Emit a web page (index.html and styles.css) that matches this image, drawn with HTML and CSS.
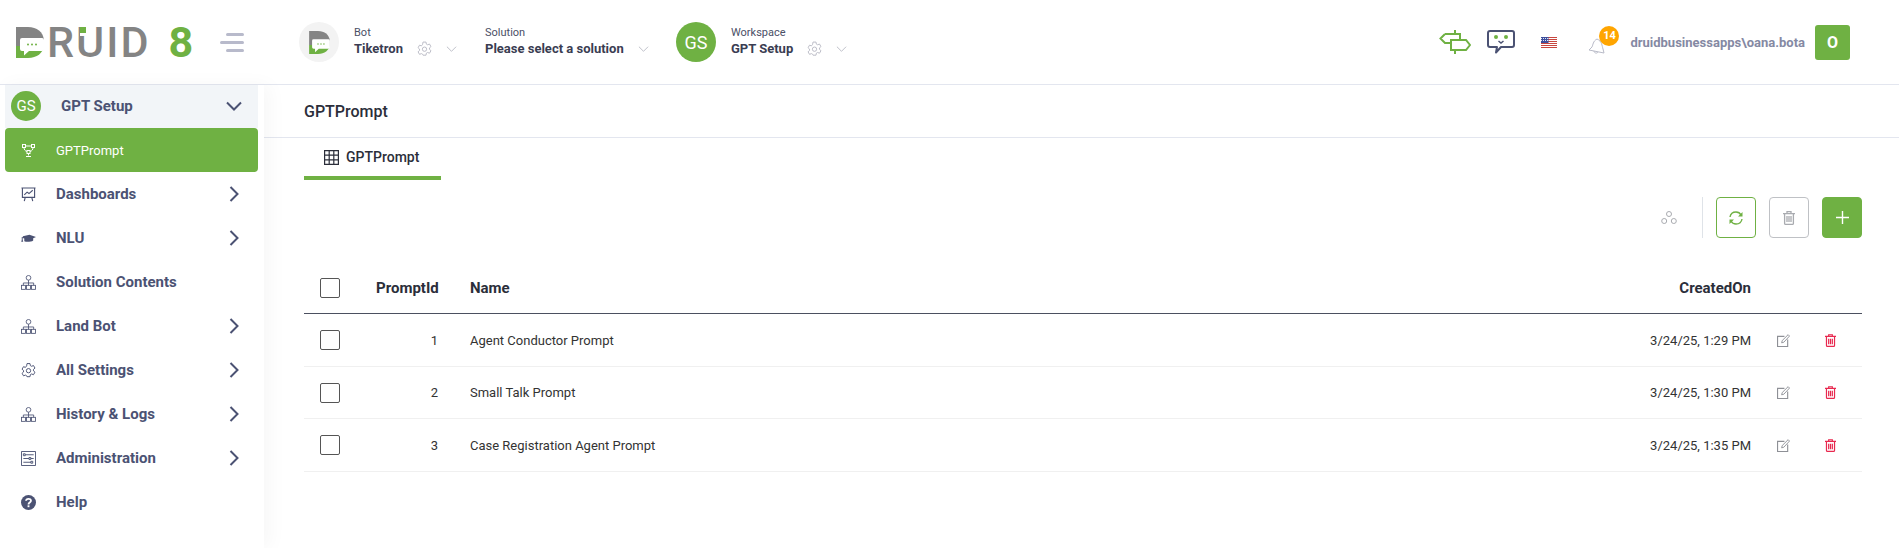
FILE: index.html
```html
<!DOCTYPE html>
<html>
<head>
  <title>GPTPrompt</title>
  <link rel="stylesheet" href="styles.css">
</head>
<body>
  <svg class="defs" width="0" height="0">
    <symbol id="i-mark" viewBox="0 0 28 31">
      <path fill="#848484" d="M0 0H12C21 0 27 5 28 13V19H0Z"/>
      <path fill="#6fb143" d="M0 19H28C27 26 21 31 12 31H0Z"/>
      <path fill="#fff" d="M6 11H26Q28 11 28 13V22Q28 24 26 24H13L8 28.500V24H6Q4 24 4 22V13Q4 11 6 11Z"/>
      <g fill="#6fb143"><circle cx="12" cy="17.500" r="1"/><circle cx="16" cy="17.500" r="1"/><circle cx="20" cy="17.500" r="1"/></g>
    </symbol>
    <symbol id="i-gear" viewBox="0 0 16 16">
      <path fill="none" stroke="currentColor" d="M6.400.6h3.200l.4 2.200 1.300.7 2-.8 1.600 2.700-1.600 1.400v1.600l1.600 1.400-1.600 2.700-2-.8-1.300.7-.4 2.200H6.400L6 13.600l-1.300-.7-2 .8L1.100 11l1.600-1.400V8L1.100 6.600l1.600-2.700 2 .8L6 3z"/>
      <circle cx="8" cy="8.200" r="2.300" fill="none" stroke="currentColor"/>
    </symbol>
    <symbol id="i-down" viewBox="0 0 12 8"><path fill="none" stroke="currentColor" d="M1 1.500l5 5 5-5"/></symbol>
    <symbol id="i-right" viewBox="0 0 10 16"><path fill="none" stroke="currentColor" stroke-width="2" d="M1.500 1l7 7-7 7"/></symbol>
    <symbol id="i-org" viewBox="0 0 16 16">
      <g fill="none" stroke="currentColor" stroke-width=".9">
        <circle cx="8" cy="3" r="2.500"/>
        <path d="M8 5.500V11M2.500 11V8.500h11V11"/>
        <rect x=".5" y="11" width="4.300" height="4.300"/><rect x="5.850" y="11" width="4.300" height="4.300"/><rect x="11.200" y="11" width="4.300" height="4.300"/>
      </g>
    </symbol>
    <symbol id="i-trash" viewBox="0 0 12 14">
      <path fill="none" stroke="currentColor" stroke-width="1.300" d="M1.600 3v9.400c0 .6.400 1 1 1h6.800c.6 0 1-.4 1-1V3M0 2.600h12M4 2.400V.7h4v1.700M4 5v6M6 5v6M8 5v6"/>
    </symbol>
    <symbol id="i-edit" viewBox="0 0 14 14">
      <path fill="none" stroke="currentColor" stroke-width="1.200" d="M8 2.500H.6v10.900h10.900V6"/>
      <path fill="none" stroke="currentColor" d="M5 9.500l.6-2.400L12 .7l1.500 1.500L7.300 8.900z"/>
    </symbol>
  </svg>

  <header class="topbar">
    <div class="logo">
      <svg class="logo-mark"><use href="#i-mark"/></svg>
      <span class="logo-word">RUID<i class="logo-dot"></i></span>
      <span class="logo-num">8</span>
    </div>
    <div class="burger"><span></span><span></span><span></span></div>

    <div class="picker picker-bot">
      <div class="avatar avatar-grey"><svg class="avatar-mark"><use href="#i-mark"/></svg></div>
      <div class="picker-text"><small>Bot</small><b>Tiketron</b></div>
      <svg class="gear"><use href="#i-gear"/></svg>
      <svg class="caret"><use href="#i-down"/></svg>
    </div>
    <div class="picker picker-solution">
      <div class="picker-text"><small>Solution</small><b>Please select a solution</b></div>
      <svg class="caret"><use href="#i-down"/></svg>
    </div>
    <div class="picker picker-workspace">
      <div class="avatar">GS</div>
      <div class="picker-text"><small>Workspace</small><b>GPT Setup</b></div>
      <svg class="gear"><use href="#i-gear"/></svg>
      <svg class="caret"><use href="#i-down"/></svg>
    </div>

    <div class="user-area">
      <svg class="top-sign" viewBox="0 0 32 24">
        <path fill="none" stroke="#6fb143" stroke-width="2" d="M16 0v4M16 20v4M6 4h15v5M12 13H6L1.500 8.500 6 4M12 10h15l4 5-4 5H12z"/>
      </svg>
      <svg class="top-chat" viewBox="0 0 28 24">
        <path fill="none" stroke="#4b5273" stroke-width="2" stroke-linejoin="round" d="M3 1h22c1 0 2 1 2 2v12c0 1-1 2-2 2H14l-5 5.500L10 17H3c-1 0-2-1-2-2V3c0-1 1-2 2-2z"/>
        <circle cx="9" cy="7" r="2" fill="#6fb143"/>
        <circle cx="19" cy="7" r="2" fill="#6fb143"/>
        <path fill="none" stroke="#4b5273" stroke-width="1.500" d="M11.500 11l2.500 2 2.500-2"/>
      </svg>
      <svg class="top-flag" viewBox="0 0 16 11">
        <rect width="16" height="11" fill="#fff"/>
        <path stroke="#c8473f" d="M0 .5h16M0 2.500h16M0 4.500h16M0 6.500h16M0 8.500h16M0 10.500h16"/>
        <rect width="7.500" height="6" fill="#3d4f9c"/>
        <path stroke="#dfe3f5" stroke-dasharray="1 1" d="M0 1.500h7.500M0 3.500h7.500"/>
      </svg>
      <div class="bell">
        <svg viewBox="0 0 18 17"><path fill="none" stroke="#b9bbc8" d="M9 2C5 4 5 8 4 10l-3 3 15 3-1-4c-1-3-1-8-6-10zM6 14c0 2 3 3 4 1"/></svg>
        <span class="badge">14</span>
      </div>
      <span class="username">druidbusinessapps\oana.bota</span>
      <div class="user-btn">O</div>
    </div>
  </header>

  <div class="page">
    <nav class="sidebar">
      <div class="nav-head">
        <div class="avatar avatar-small">GS</div>
        <span>GPT Setup</span>
        <svg class="head-caret" viewBox="0 0 16 10"><path fill="none" stroke="#4b5273" stroke-width="2" d="M1 1.500l7 7 7-7"/></svg>
      </div>
      <a class="nav-item active">
        <svg class="nav-icon" viewBox="0 0 15 15">
          <g fill="none" stroke="#fff"><rect x="1.500" y="1.500" width="3" height="3"/><rect x="10.500" y="1.500" width="3" height="3"/><rect x="6" y="7.500" width="3" height="3"/><path d="M4.500 3h6M3 4.500c0 2 1 3.500 3 4M12 4.500c0 2-1 3.500-3 4M7.500 10.500v2M5 13.500h5"/></g>
        </svg>
        <span>GPTPrompt</span>
      </a>
      <a class="nav-item">
        <svg class="nav-icon" viewBox="0 0 16 16"><path fill="none" stroke="currentColor" stroke-width="1.200" d="M.5 1h15M1.500 1v10h13V1M3.500 8.500l3-3 2 1.500 4-3.500M4.500 11L3.500 15M11.500 11l1 4"/></svg>
        <span>Dashboards</span>
        <svg class="nav-more"><use href="#i-right"/></svg>
      </a>
      <a class="nav-item">
        <svg class="nav-icon" viewBox="0 0 16 16"><path fill="currentColor" d="M2 5.500L9 4l7 2.500-3 1.200V10c-2 1.600-7 2-9.500 1V8L2 7.500zM.8 6.500h1v3l.6 2H.2l.6-2z"/></svg>
        <span>NLU</span>
        <svg class="nav-more"><use href="#i-right"/></svg>
      </a>
      <a class="nav-item">
        <svg class="nav-icon"><use href="#i-org"/></svg>
        <span>Solution Contents</span>
      </a>
      <a class="nav-item">
        <svg class="nav-icon"><use href="#i-org"/></svg>
        <span>Land Bot</span>
        <svg class="nav-more"><use href="#i-right"/></svg>
      </a>
      <a class="nav-item">
        <svg class="nav-icon"><use href="#i-gear"/></svg>
        <span>All Settings</span>
        <svg class="nav-more"><use href="#i-right"/></svg>
      </a>
      <a class="nav-item">
        <svg class="nav-icon"><use href="#i-org"/></svg>
        <span>History &amp; Logs</span>
        <svg class="nav-more"><use href="#i-right"/></svg>
      </a>
      <a class="nav-item">
        <svg class="nav-icon" viewBox="0 0 16 16"><path fill="none" stroke="currentColor" d="M.5.5h15v15H.5zM2.500 3h2v2h-2zM4.500 4h9M2.500 8h6M8.500 7h2v2h-2zM10.500 8h3M2.500 12h8M10.500 11h2v2h-2z"/></svg>
        <span>Administration</span>
        <svg class="nav-more"><use href="#i-right"/></svg>
      </a>
      <a class="nav-item">
        <svg class="nav-icon" viewBox="0 0 16 16">
          <circle cx="8" cy="8" r="8" fill="currentColor"/>
          <path fill="none" stroke="#fff" stroke-width="2" d="M5.400 6.200C5.500 3.400 10.600 3.400 10.600 6.100 10.600 8 8 8 8 10"/>
          <rect x="7" y="11" width="2" height="2" fill="#fff"/>
        </svg>
        <span>Help</span>
      </a>
    </nav>

    <main class="content">
      <div class="title-bar">GPTPrompt</div>
      <div class="tabs">
        <div class="tab">
          <svg class="tab-icon" viewBox="0 0 15 15"><path fill="none" stroke="#2b2e3a" stroke-width="1.200" d="M.6.6h13.800v13.800H.6zM.6 5.200h13.800M.6 9.800h13.800M5.200.6v13.800M9.800.6v13.800"/></svg>
          GPTPrompt
        </div>
      </div>

      <div class="toolbar">
        <svg class="tool-group" viewBox="0 0 16 13">
          <g fill="none" stroke="#a9abb0"><circle cx="8" cy="3" r="2.500"/><circle cx="3.200" cy="10" r="2.500"/><circle cx="12.800" cy="10" r="2.500"/></g>
        </svg>
        <div class="tool-divider"></div>
        <button class="tool-btn tool-refresh">
          <svg viewBox="0 0 14 14"><path fill="none" stroke="#6fb143" stroke-width="1.400" d="M1 6C1.500 3 4 1 7 1c2.200 0 4 1 5 3M13 8c-.5 3-3 5-6 5-2.200 0-4-1-5-3"/><path fill="#6fb143" d="M13.500 1v4.500H9zM.5 13V8.500H5z"/></svg>
        </button>
        <button class="tool-btn tool-trash"><svg><use href="#i-trash"/></svg></button>
        <button class="tool-btn tool-add">
          <svg viewBox="0 0 13 13"><path stroke="#fff" stroke-width="1.400" d="M6.500 0v13M0 6.500h13"/></svg>
        </button>
      </div>

      <table class="grid">
        <thead>
          <tr>
            <th class="col-check"><span class="check"></span></th>
            <th class="col-id">PromptId</th>
            <th class="col-name">Name</th>
            <th class="col-date">CreatedOn</th>
            <th class="col-edit"></th>
            <th class="col-del"></th>
          </tr>
        </thead>
        <tbody>
          <tr>
            <td><span class="check"></span></td>
            <td class="col-id">1</td>
            <td>Agent Conductor Prompt</td>
            <td class="col-date">3/24/25, 1:29 PM</td>
            <td class="col-edit"><svg class="row-edit"><use href="#i-edit"/></svg></td>
            <td class="col-del"><svg class="row-del"><use href="#i-trash"/></svg></td>
          </tr>
          <tr>
            <td><span class="check"></span></td>
            <td class="col-id">2</td>
            <td>Small Talk Prompt</td>
            <td class="col-date">3/24/25, 1:30 PM</td>
            <td class="col-edit"><svg class="row-edit"><use href="#i-edit"/></svg></td>
            <td class="col-del"><svg class="row-del"><use href="#i-trash"/></svg></td>
          </tr>
          <tr>
            <td><span class="check"></span></td>
            <td class="col-id">3</td>
            <td>Case Registration Agent Prompt</td>
            <td class="col-date">3/24/25, 1:35 PM</td>
            <td class="col-edit"><svg class="row-edit"><use href="#i-edit"/></svg></td>
            <td class="col-del"><svg class="row-del"><use href="#i-trash"/></svg></td>
          </tr>
        </tbody>
      </table>
    </main>
  </div>
</body>
</html>
```

FILE: styles.css
```css
* {
  box-sizing: border-box;
}

html,
body {
  height: 100%;
}

body {
  margin: 0;
  background-color: #ffffff;
  color: #333333;
  font-family: Roboto, "Liberation Sans", sans-serif;
  font-size: 13px;
  overflow: hidden;
  display: flex;
  flex-direction: column;
}

.defs {
  position: absolute;
}

/* Top bar */
.topbar {
  height: 85px;
  flex: none;
  display: flex;
  align-items: center;
  border-bottom: 1px solid #e3e6ef;
  padding-left: 16px;
}

.logo {
  width: 204px;
  display: flex;
  align-items: center;
  height: 31px;
}

.logo-mark {
  width: 28px;
  height: 31px;
}

.logo-word {
  position: relative;
  margin-left: 3px;
  font-size: 43px;
  line-height: 31px;
  font-weight: 500;
  letter-spacing: 2px;
  color: #848484;
}

.logo-dot {
  position: absolute;
  left: 33px;
  top: 0;
  width: 6px;
  height: 6px;
  background-color: #6fb143;
  box-shadow: 0 3px 0 #ffffff;
}

.logo-num {
  margin-left: 18px;
  font-size: 43px;
  line-height: 31px;
  font-weight: 700;
  color: #6fb143;
}

.burger {
  width: 24px;
  margin-right: 55px;
  display: flex;
  flex-direction: column;
  align-items: flex-end;
  gap: 5px;
}

.burger span {
  height: 3px;
  width: 18px;
  background-color: #b8bacb;
  border-radius: 2px;
}

.burger span:nth-child(2) {
  width: 24px;
}

.picker {
  display: flex;
  align-items: center;
}

.picker-bot {
  width: 186px;
}

.picker-solution {
  width: 191px;
}

.avatar {
  width: 40px;
  height: 40px;
  border-radius: 50%;
  background-color: #6fb143;
  color: #ffffff;
  font-size: 18px;
  font-weight: 400;
  display: flex;
  align-items: center;
  justify-content: center;
  flex: none;
}

.avatar-grey {
  background-color: #f3f3f3;
}

.avatar-mark {
  width: 21px;
  height: 23px;
}

.avatar-small {
  width: 30px;
  height: 30px;
  font-size: 15px;
}

.picker-bot .picker-text,
.picker-workspace .picker-text {
  margin-left: 15px;
}

.picker-text small {
  display: block;
  font-size: 11px;
  line-height: 14px;
  color: #4b4f66;
}

.picker-text b {
  display: block;
  font-size: 13px;
  line-height: 18px;
  font-weight: 700;
  color: #3a3d52;
}

.gear {
  width: 15px;
  height: 16px;
  margin-left: 14px;
  margin-top: 14px;
  color: #b9bac4;
}

.caret {
  width: 11px;
  height: 8px;
  margin-left: 14px;
  margin-top: 13px;
  color: #b9bac4;
}

.user-area {
  margin-left: auto;
  margin-right: 49px;
  display: flex;
  align-items: center;
}

.top-sign {
  width: 32px;
  height: 24px;
}

.top-chat {
  width: 28px;
  height: 24px;
  margin-left: 16px;
}

.top-flag {
  width: 16px;
  height: 11px;
  margin-left: 26px;
}

.bell {
  position: relative;
  width: 18px;
  height: 17px;
  margin-left: 31px;
  margin-top: 6px;
}

.bell svg {
  display: block;
  width: 18px;
  height: 17px;
}

.badge {
  position: absolute;
  left: 11px;
  top: -11px;
  width: 20px;
  height: 20px;
  border-radius: 50%;
  background-color: #ffa500;
  color: #ffffff;
  font-size: 11px;
  font-weight: 700;
  line-height: 20px;
  text-align: center;
}

.username {
  margin-left: 24px;
  font-size: 13px;
  font-weight: 700;
  color: #8589a3;
}

.user-btn {
  width: 35px;
  height: 35px;
  margin-left: 10px;
  border-radius: 3px;
  background-color: #6fb143;
  color: #ffffff;
  font-size: 16px;
  font-weight: 700;
  display: flex;
  align-items: center;
  justify-content: center;
}

/* Page */
.page {
  flex: 1;
  display: flex;
  min-height: 0;
}

.sidebar {
  width: 264px;
  flex: none;
  padding: 0 6px 0 5px;
  background-color: #ffffff;
  box-shadow: 6px 0 18px rgba(0, 0, 0, 0.035);
  position: relative;
  z-index: 1;
}

.nav-head {
  height: 43px;
  display: flex;
  align-items: center;
  padding: 0 0 1px 6px;
  background-color: #f2f5f8;
  color: #4b5273;
  font-size: 15px;
  font-weight: 700;
}

.nav-head span {
  margin-left: 20px;
}

.head-caret {
  width: 16px;
  height: 10px;
  margin-left: auto;
  margin-right: 16px;
}

.nav-item {
  height: 44px;
  display: flex;
  align-items: center;
  padding-left: 16px;
  color: #4b5273;
  font-size: 15px;
  font-weight: 700;
}

.nav-item span {
  margin-left: 20px;
}

.nav-item.active {
  background-color: #6fb143;
  border-radius: 4px;
  color: #ffffff;
  font-size: 13px;
  font-weight: 400;
}

.nav-icon {
  width: 15px;
  height: 15px;
  flex: none;
}

.nav-more {
  width: 10px;
  height: 16px;
  margin-left: auto;
  margin-right: 19px;
  color: #4b5273;
}

/* Content */
.content {
  flex: 1;
  min-width: 0;
}

.title-bar {
  height: 53px;
  padding-left: 40px;
  display: flex;
  align-items: center;
  border-bottom: 1px solid #e3e6ef;
  font-size: 16px;
  font-weight: 500;
  color: #2b2e3a;
}

.tabs {
  padding-left: 40px;
}

.tab {
  width: 137px;
  height: 42px;
  border-bottom: 4px solid #6fb143;
  display: flex;
  align-items: center;
  gap: 7px;
  padding-left: 20px;
  font-size: 14px;
  font-weight: 500;
  color: #2b2e3a;
}

.tab-icon {
  width: 15px;
  height: 15px;
}

.toolbar {
  height: 41px;
  margin-top: 17px;
  padding-right: 37px;
  display: flex;
  align-items: center;
  justify-content: flex-end;
}

.tool-group {
  width: 16px;
  height: 13px;
  margin-right: 25px;
}

.tool-divider {
  width: 1px;
  height: 41px;
  background-color: #dfe3e8;
  margin-right: 13px;
}

.tool-btn {
  width: 40px;
  height: 41px;
  margin-left: 13px;
  padding: 0;
  border-radius: 4px;
  background-color: #ffffff;
  display: flex;
  align-items: center;
  justify-content: center;
}

.tool-divider + .tool-btn {
  margin-left: 0;
}

.tool-refresh {
  border: 1px solid #6fb143;
}

.tool-refresh svg {
  width: 14px;
  height: 14px;
}

.tool-trash {
  border: 1px solid #bfc1c5;
  color: #a9abb0;
}

.tool-trash svg {
  width: 12px;
  height: 14px;
}

.tool-add {
  border: 1px solid #6fb143;
  background-color: #6fb143;
}

.tool-add svg {
  width: 13px;
  height: 13px;
}

/* Table */
.grid {
  width: 1558px;
  margin: 24px 0 0 40px;
  border-collapse: separate;
  border-spacing: 0;
  table-layout: fixed;
  font-size: 13px;
  color: #333333;
}

.grid th {
  height: 52px;
  padding: 0 16px;
  font-size: 15px;
  font-weight: 700;
  text-align: left;
  color: #2b2e3a;
  border-bottom: 1px solid #4b5060;
}

.grid td {
  height: 53px;
  padding: 0 16px;
  border-bottom: 1px solid #f0f0f0;
}

.grid tbody tr:nth-child(2) td {
  height: 52px;
}

.col-check {
  width: 56px;
}

.col-id {
  width: 94px;
}

.grid .col-id,
.grid .col-date {
  text-align: right;
}

.col-date {
  width: 200px;
}

.col-edit {
  width: 32px;
}

.col-del {
  width: 63px;
}

.grid .col-edit,
.grid .col-del {
  padding: 0;
}

.check {
  display: block;
  width: 20px;
  height: 20px;
  border: 1px solid #555555;
  border-radius: 2px;
}

.row-edit {
  display: block;
  width: 13px;
  height: 13px;
  margin: 0 auto;
  color: #8e9096;
}

.row-del {
  display: block;
  width: 11px;
  height: 13px;
  margin: 0 auto;
  color: #e8294f;
}
```
